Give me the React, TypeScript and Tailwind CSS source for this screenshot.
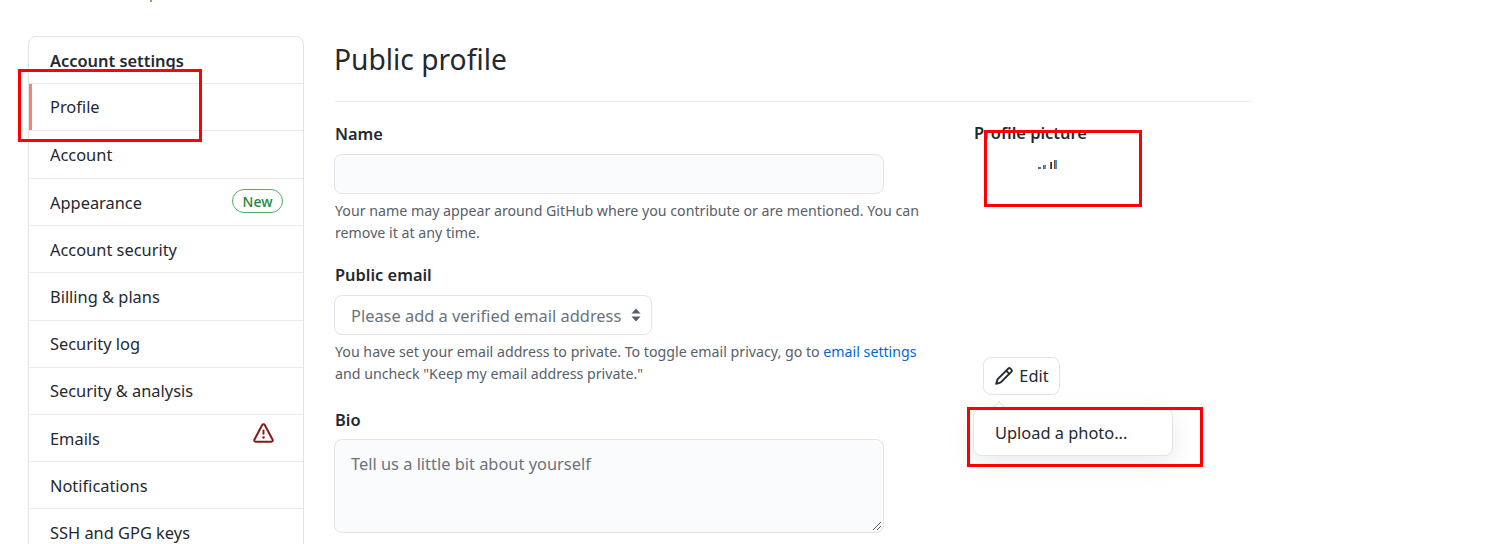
import React from "react";

const items = ["Account", "Appearance", "Account security", "Billing & plans", "Security log", "Security & analysis", "Emails", "Notifications", "SSH and GPG keys"];

function Row({ label }: { label: string }) {
  return (
    <div className={"flex shrink-0 items-center justify-between border-t border-[#e9ebef] pl-[21px] pr-5 pt-[2px] " + (label === "Account" ? "h-[48px]" : "h-[47.15px]")}>
      <span>{label}</span>
      {label === "Appearance" && (
        <span className="-mt-[4px] flex h-[24px] w-[51px] items-center justify-center rounded-full border border-[#4fad6a] text-[14px] font-medium text-[#22863a]">New</span>
      )}
      {label === "Emails" && (
        <svg width="21" height="21" viewBox="0 0 16 16" className="mr-[9px] -mt-[10px]" fill="#86181d">
          <path fillRule="evenodd" d="M8.22 1.754a.25.25 0 00-.44 0L1.698 13.132a.25.25 0 00.22.368h12.164a.25.25 0 00.22-.368L8.22 1.754zm-1.763-.707c.659-1.234 2.427-1.234 3.086 0l6.082 11.378A1.75 1.75 0 0114.082 15H1.918a1.75 1.75 0 01-1.543-2.575L6.457 1.047zM9 11a1 1 0 11-2 0 1 1 0 012 0zm-.25-5.25a.75.75 0 00-1.5 0v2.5a.75.75 0 001.5 0v-2.5z" />
        </svg>
      )}
    </div>
  );
}

export default function App() {
  return (
    <div className="relative h-[544px] w-[1505px] overflow-hidden bg-white font-['Noto_Sans','Open_Sans',sans-serif] text-[16.4px] text-[#24292e]">
      <div className="flex items-start pl-[28px] pt-[36px]">
        <aside className="h-[560px] w-[276px] shrink-0 overflow-hidden rounded-t-[8px] border border-[#e1e4e8]">
          <div className="flex h-[46px] items-center pl-[21px] pt-[3px] font-semibold">Account settings</div>
          <div className="relative flex h-[47.15px] items-center border-t border-[#e9ebef] pl-[21px]">
            <span className="absolute bottom-0 left-0 top-0 w-[3px] bg-[#f9826c]" />
            Profile
          </div>
          {items.map((l) => <Row key={l} label={l} />)}
        </aside>
        <main className="ml-[31px] w-[917px] shrink-0">
          <div className="border-b border-[#e9ebef] pb-[21px] pt-[2px]">
            <h1 className="-ml-px text-[28.2px] leading-[42px] font-normal">Public profile</h1>
          </div>
          <div className="flex">
            <div className="w-[639px] shrink-0">
              <div className="mt-[21px] leading-[22px] font-semibold">Name</div>
              <div className="-ml-px mt-[9px] h-[40px] w-[550px] rounded-[8px] border border-[#e1e4e8] bg-[#fafbfc]" />
              <p className="mt-[6px] w-[585px] text-[14.2px] leading-[22px] text-[#586069]">Your name may appear around GitHub where you contribute or are mentioned. You can remove it at any time.</p>
              <div className="mt-[20px] leading-[22px] font-semibold">Public email</div>
              <div className="-ml-px mt-[9px] flex h-[40px] w-[318px] items-center justify-between rounded-[8px] border border-[#e1e4e8] pl-[16px] pr-[10px] text-[#6a737d]">
                <span className="pt-[2px]">Please add a verified email address</span>
                <svg width="10" height="16" viewBox="0 0 10 16" fill="#586069"><path d="M5 1.5l4.5 5h-9zM5 14.5L.5 9.5h9z" /></svg>
              </div>
              <p className="mt-[6px] w-[585px] text-[14.2px] leading-[22px] text-[#586069]">You have set your email address to private. To toggle email privacy, go to <span className="text-[#0366d6]">email settings</span> and uncheck "Keep my email address private."</p>
              <div className="mt-[24px] leading-[22px] font-semibold">Bio</div>
              <div className="relative -ml-px mt-[8px] h-[94px] w-[550px] rounded-[8px] border border-[#e1e4e8] bg-[#fafbfc] px-[16px] pt-[12px] text-[#6a737d]">
                Tell us a little bit about yourself
                <svg width="10" height="10" viewBox="0 0 10 10" className="absolute bottom-[1px] right-[1px]" stroke="#555" strokeWidth="1"><path d="M1 9l8-8M5 9l4-4" /></svg>
              </div>
            </div>
            <div className="relative flex-1">
              <div className="mt-[20px] leading-[22px] font-semibold">Profile picture</div>
              <svg width="20" height="10" viewBox="0 0 20 10" className="ml-[64px] mt-[16px] block">
                <rect x="0" y="7" width="3" height="2" fill="#6f6a60" />
                <rect x="5" y="5" width="1" height="4" fill="#7a5a3a" />
                <rect x="6" y="5" width="2" height="4" fill="#4a90d0" />
                <rect x="12" y="2" width="1" height="7" fill="#7a5a3a" />
                <rect x="13" y="2" width="1" height="7" fill="#333" />
                <rect x="16" y="0" width="1" height="9" fill="#6a5040" />
                <rect x="17" y="0" width="2" height="9" fill="#4a90d0" />
              </svg>
              <button className="ml-[9px] mt-[187px] flex h-[38px] w-[77px] items-center justify-center gap-[5px] rounded-[8px] border border-[#e1e4e8] bg-white">
                <svg width="20" height="20" viewBox="0 0 16 16" fill="#24292e"><path fillRule="evenodd" d="M11.013 1.427a1.75 1.75 0 012.474 0l1.086 1.086a1.75 1.75 0 010 2.474l-8.61 8.61c-.21.21-.47.364-.756.445l-3.251.93a.75.75 0 01-.927-.928l.929-3.25a1.75 1.75 0 01.445-.758l8.61-8.61zm1.414 1.06a.25.25 0 00-.354 0L10.811 3.75l1.439 1.44 1.263-1.263a.25.25 0 000-.354l-1.086-1.086zM11.189 6.25L9.75 4.81l-6.286 6.287a.25.25 0 00-.064.108l-.558 1.953 1.953-.558a.249.249 0 00.108-.064l6.286-6.286z" /></svg>
                Edit
              </button>
              <div className="absolute -left-px top-[306px] w-[200px] rounded-[8px] border border-[#e1e4e8] bg-white pb-[11px] pl-[21px] pt-[13px] leading-[22px] shadow-[0_8px_24px_rgba(149,157,165,0.2)]">
                <span className="absolute -top-[6px] left-[20px] h-[10px] w-[10px] rotate-45 border-l border-t border-[#e1e4e8] bg-white" />
                Upload a photo...
              </div>
            </div>
          </div>
        </main>
      </div>
      <div className="absolute left-[18px] top-[69px] h-[73px] w-[184px] border-[3px] border-[#ff0000]" />
      <div className="absolute left-[984px] top-[130px] h-[77px] w-[158px] border-[3px] border-[#ff0000]" />
      <div className="absolute left-[967px] top-[407px] h-[60px] w-[236px] border-[3px] border-[#ff0000]" />
      <div className="absolute left-[150px] top-0 h-[2px] w-[1px] bg-[#c89070]" />
      <div className="absolute left-[151px] top-0 h-[2px] w-[1px] bg-[#70a0d0]" />
    </div>
  );
}
